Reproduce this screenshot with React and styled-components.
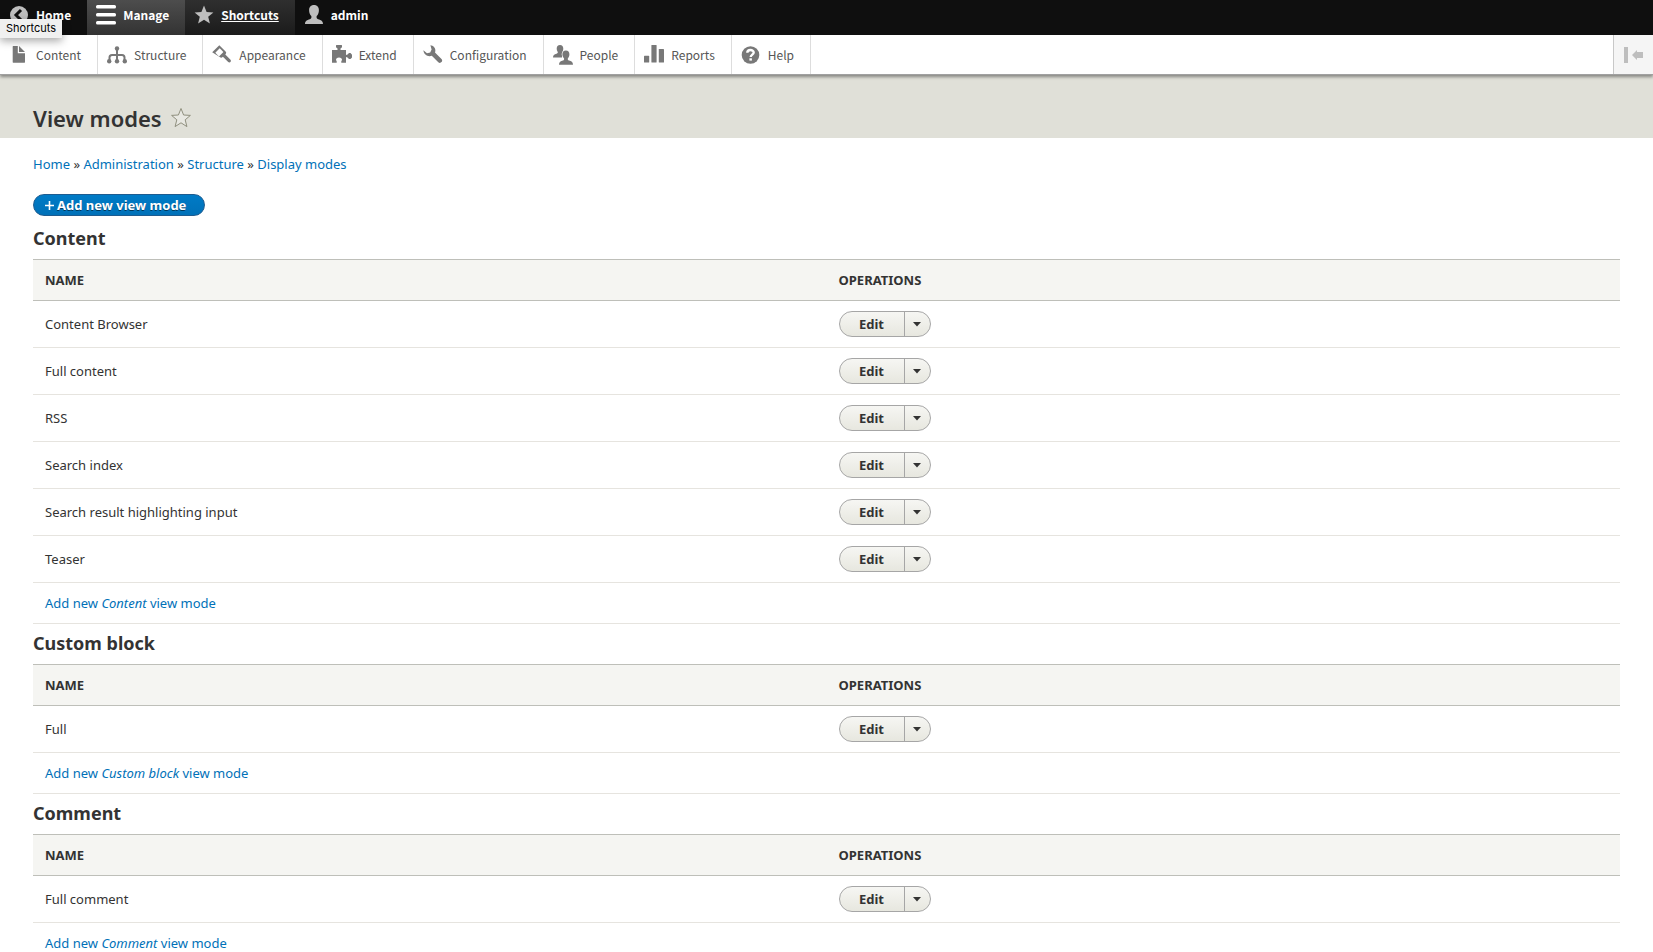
import React from 'react'
import styled, { createGlobalStyle, css } from 'styled-components'

const palette = {
  text: '#333333',
  link: '#0071b8',
  header: '#e0e0d8',
  tableHead: '#f5f5f2',
  line: '#bebfb9',
  rowLine: '#e6e4df',
  icon: '#787878',
}

const toolbarFont = "'Noto Sans CJK SC', 'Noto Sans', sans-serif"
const bodyFont = "'Noto Sans', 'Open Sans', sans-serif"

const tabs = [
  { name: 'Home', icon: 'back' },
  { name: 'Manage', icon: 'hamburger', state: 'active' },
  { name: 'Shortcuts', icon: 'star', state: 'hover' },
  { name: 'admin', icon: 'user' },
]

const menu = [
  { name: 'Content', icon: 'file' },
  { name: 'Structure', icon: 'orgchart' },
  { name: 'Appearance', icon: 'paintbrush' },
  { name: 'Extend', icon: 'puzzle' },
  { name: 'Configuration', icon: 'wrench' },
  { name: 'People', icon: 'people' },
  { name: 'Reports', icon: 'barchart' },
  { name: 'Help', icon: 'help' },
]

const breadcrumb = ['Home', 'Administration', 'Structure', 'Display modes']

const groups = [
  {
    title: 'Content',
    modes: [
      'Content Browser',
      'Full content',
      'RSS',
      'Search index',
      'Search result highlighting input',
      'Teaser',
    ],
  },
  { title: 'Custom block', modes: ['Full'] },
  { title: 'Comment', modes: ['Full comment'] },
]

const starPoints =
  '10,0.5 12.6,7 19.4,7.4 14.2,11.8 15.9,18.6 10,14.8 4.1,18.6 5.8,11.8 0.6,7.4 7.4,7'

const shapes = {
  back: (
    <>
      <circle cx="10" cy="10" r="9" />
      <path d="M12 5 7 10l5 5" fill="none" stroke="#0f0f0f" strokeWidth="3" />
    </>
  ),
  hamburger: (
    <g fill="#fff">
      <rect y="0" width="20" height="3.4" rx="1.5" />
      <rect y="8" width="20" height="3.4" rx="1.5" />
      <rect y="16" width="20" height="3.4" rx="1.5" />
    </g>
  ),
  star: <polygon points={starPoints} />,
  user: (
    <path d="M10 0c3.2 0 4.9 2.2 4.9 5.2 0 2.4-.8 4.6-2.2 5.9-.5 1.6.1 2.6 1.5 3.1 2.8.8 4.8 1.700 4.800 4.800H1c0-3.100 2-4 4.800-4.800 1.400-.5 2-1.500 1.500-3.100C5.900 9.800 5.100 7.600 5.100 5.200 5.100 2.200 6.800 0 10 0z" />
  ),
  file: (
    <path d="M4.200 2h4.600v7.300h7.200v9c0 .3-.2.500-.5.500H4.200c-.3 0-.5-.2-.5-.5V2.500c0-.3.2-.5.5-.5zM10 2l6 6h-6z" />
  ),
  orgchart: (
    <>
      <circle cx="10" cy="4.5" r="2.2" />
      <circle cx="2.2" cy="17.3" r="2.2" />
      <circle cx="10" cy="17.3" r="2.2" />
      <circle cx="17.8" cy="17.3" r="2.2" />
      <path
        d="M10 5v12M2.500 17v-3.500q0-2.500 2.500-2.500h10q2.500 0 2.500 2.500V17"
        fill="none"
        stroke={palette.icon}
        strokeWidth="2"
      />
    </>
  ),
  paintbrush: (
    <>
      <path d="M.2 8.300 7.300 1.200l6.500 6.500c.8.800.3 1.800-.5 2.700l5.200 5.300c1.400 1.500-.8 3.700-2.300 2.300l-5.300-5.200c-1 .9-1.900 1.400-2.800.5z" />
      <path d="M3.300 8.700 7.700 4.300l3.700 3.700L7 12.400z" fill="#fff" />
    </>
  ),
  puzzle: (
    <path d="M0 6h5.500V4.500L4 3.200V1.500c0-.3.200-.5.500-.5h5c.3 0 .5.200.5.500v1.700L8.500 4.500V6H14v5l1.500-.5L17 9h1.500L20 10.800v2.700L18.500 15H17l-1.500-1.500L14 13v5.700H9.300v-1.400l.7-1.300c0-1.400-1-2.500-3-2.500s-3 1.100-3 2.500l.7 1.300v1.400H0z" />
  ),
  wrench: (
    <path d="M7.400 1.200c3.600.2 5.900 3.800 4.600 7.400l6.500 6.400c2 2.200-.9 5.200-3.200 3.300l-6.500-6.500C5 13.300.7 10.700.4 6.300L4 9.200l3.200-.6 1.400-3.200z" />
  ),
  people: (
    <>
      <path d="M7 1c2.200 0 3.300 1.500 3.300 3.700 0 1.200-.4 2.400-1 3.300-1.300 2 .2 4-.3 5.500H0c0-2.200 1.300-3 3.500-3.700 1.300-.4 1.700-1.200 1-2.200-.5-.8-.8-1.800-.8-2.900C3.700 2.500 4.800 1 7 1z" />
      <path
        d="M12.900 6.500c2.300 0 3.500 1.600 3.500 3.800 0 1.700-.6 3-1.500 4-.3 1.300 0 1.900 1.100 2.300 2.300.7 4 1.500 4 4.200H6c0-2.700 1.700-3.500 4-4.200 1-.4 1.300-1 1-2.300-1-1-1.600-2.300-1.600-4 0-2.200 1.200-3.800 3.500-3.800z"
        stroke="#fff"
        strokeWidth="1"
        paintOrder="stroke"
      />
    </>
  ),
  barchart: (
    <>
      <rect y="11.8" width="5.2" height="6.7" rx=".6" />
      <rect x="7.4" y="1" width="5.2" height="17.5" rx=".6" />
      <rect x="14.8" y="5" width="5.2" height="13.5" rx=".6" />
    </>
  ),
  help: (
    <>
      <circle cx="9.5" cy="11" r="8.8" />
      <path
        d="M6.300 8.800c0-3.700 6.400-3.500 6.400-.3 0 2.100-3 2.200-3 4.600"
        fill="none"
        stroke="#fff"
        strokeWidth="2.4"
      />
      <rect x="8.4" y="14.3" width="2.5" height="2.3" fill="#fff" />
    </>
  ),
}

const Icon = ({ name, color, height }) => (
  <IconSvg
    viewBox={`0 0 20 ${height}`}
    width="20"
    height={height}
    fill={color}
    aria-hidden="true"
  >
    {shapes[name]}
  </IconSvg>
)

const ViewModeTable = ({ title, modes }) => (
  <section>
    <GroupTitle>{title}</GroupTitle>
    <Table>
      <thead>
        <tr>
          <HeadCell scope="col">Name</HeadCell>
          <HeadCell scope="col">Operations</HeadCell>
        </tr>
      </thead>
      <tbody>
        {modes.map(mode => (
          <tr key={mode}>
            <Cell>{mode}</Cell>
            <Cell>
              <DropButton>
                <EditButton type="button">Edit</EditButton>
                <ToggleButton type="button" aria-label="List additional actions">
                  <svg width="8" height="5" viewBox="0 0 8 5" aria-hidden="true">
                    <path d="M0 0h8L4 4.500z" fill={palette.text} />
                  </svg>
                </ToggleButton>
              </DropButton>
            </Cell>
          </tr>
        ))}
        <tr>
          <Cell colSpan={2}>
            <Link href="#add">
              Add new <em>{title}</em> view mode
            </Link>
          </Cell>
        </tr>
      </tbody>
    </Table>
  </section>
)

const App = () => {
  return (
    <>
      <GlobalStyle />
      <Toolbar>
        <TabBar>
          {tabs.map(tab => (
            <Tab key={tab.name} href="#tab" $state={tab.state}>
              <Icon name={tab.icon} color="#bebebe" height={20} />
              {tab.name}
            </Tab>
          ))}
        </TabBar>
        <Tooltip role="tooltip">Shortcuts</Tooltip>
        <Tray>
          {menu.map(item => (
            <MenuLink key={item.name} href="#menu">
              <Icon name={item.icon} color={palette.icon} height={21} />
              {item.name}
            </MenuLink>
          ))}
          <OrientationButton type="button" aria-label="Vertical orientation">
            <svg width="20" height="16" viewBox="0 0 20 16" aria-hidden="true">
              <path d="M0 0h4v16H0zM8 8l5-5v2h6v6h-6v2z" fill="#bebebe" />
            </svg>
          </OrientationButton>
        </Tray>
      </Toolbar>

      <PageHeader>
        <PageTitle>View modes</PageTitle>
        <StarButton type="button" aria-label="Add to shortcuts">
          <svg width="20" height="20" viewBox="0 0 20 20" aria-hidden="true">
            <polygon
              points={starPoints}
              fill="#e8e8e2"
              stroke="#8f8f7e"
              strokeLinejoin="round"
            />
          </svg>
        </StarButton>
      </PageHeader>

      <Main>
        <Breadcrumb aria-label="Breadcrumb">
          {breadcrumb.map((name, i) => (
            <React.Fragment key={name}>
              {i > 0 && ' » '}
              <Link href="#crumb">{name}</Link>
            </React.Fragment>
          ))}
        </Breadcrumb>
        <AddButton href="#add">
          <svg width="9" height="9" viewBox="0 0 9 9" aria-hidden="true">
            <path d="M4.500 0v9M0 4.500h9" stroke="#fff" strokeWidth="1.6" />
          </svg>
          Add new view mode
        </AddButton>
        {groups.map(group => (
          <ViewModeTable key={group.title} {...group} />
        ))}
      </Main>
    </>
  )
}

const GlobalStyle = createGlobalStyle`
  * {
    box-sizing: border-box;
  }
  html {
    scrollbar-width: none;
  }
  body {
    margin: 0;
    background: #fff;
    color: ${palette.text};
    font: 13px/20px ${bodyFont};
  }
  button {
    font: inherit;
    color: inherit;
    cursor: pointer;
  }
`

const IconSvg = styled.svg`
  flex: none;
`

const Toolbar = styled.header`
  position: relative;
  font-family: ${toolbarFont};
  font-size: 12px;
  box-shadow: 0 2px 3px rgba(0, 0, 0, 0.4);
`

const TabBar = styled.nav`
  display: flex;
  height: 35px;
  background: #0f0f0f;
`

const itemLayout = css`
  display: flex;
  align-items: center;
  gap: 7px;
  padding: 0 16px 0 9px;
  text-decoration: none;
`

const Tab = styled.a`
  ${itemLayout}
  padding-bottom: 5px;
  color: #fff;
  font-weight: 700;

  ${({ $state }) =>
    $state === 'active' &&
    css`
      background: linear-gradient(#4d4d4d, #333);
    `}
  ${({ $state }) =>
    $state === 'hover' &&
    css`
      background: linear-gradient(#2f2f2f, #1b1b1b);
      text-decoration: underline;
    `}
`

const Tooltip = styled.div`
  position: absolute;
  top: 19px;
  left: 0;
  padding: 0 6px;
  background: #f0f0f0;
  color: #000;
  font: 11px/19px Inter, sans-serif;
  box-shadow: 0 3px 8px rgba(0, 0, 0, 0.35);
`

const Tray = styled.nav`
  display: flex;
  height: 40px;
  background: #fff;
  border-bottom: 1px solid #a0a0a0;
`

const MenuLink = styled.a`
  ${itemLayout}
  border-right: 1px solid #dddddd;
  color: #565656;
`

const OrientationButton = styled.button`
  display: flex;
  align-items: center;
  justify-content: center;
  width: 40px;
  margin-left: auto;
  padding: 0;
  background: #f5f5f5;
  border: 0;
  border-left: 1px solid #c8c8c8;
`

const PageHeader = styled.div`
  display: flex;
  align-items: center;
  gap: 9px;
  padding: 28px 33px 5px;
  background: ${palette.header};
`

const PageTitle = styled.h1`
  margin: 0;
  font-size: 22px;
  line-height: 30px;
  font-weight: 600;
`

const StarButton = styled.button`
  display: flex;
  padding: 0;
  border: 0;
  background: none;
`

const Main = styled.main`
  padding: 16px 33px;
`

const Breadcrumb = styled.nav`
  margin-bottom: 20px;
`

const Link = styled.a`
  color: ${palette.link};
  text-decoration: none;
`

const AddButton = styled.a`
  display: flex;
  align-items: center;
  gap: 3px;
  width: fit-content;
  height: 22px;
  margin-bottom: 3px;
  padding: 0 18px 0 11px;
  border: 1px solid #1e5c90;
  border-radius: 20px;
  background: linear-gradient(#007bc6, #0071b8);
  color: #fff;
  font-weight: 700;
  text-decoration: none;
  text-shadow: 0 1px rgba(0, 0, 0, 0.5);
`

const GroupTitle = styled.h2`
  margin: 0;
  padding: 4px 0 6px;
  font-size: 18px;
  line-height: 30px;
  font-weight: 700;
`

const Table = styled.table`
  width: 100%;
  table-layout: fixed;
  border-spacing: 0;
`

const HeadCell = styled.th`
  padding: 10px 12px;
  background: ${palette.tableHead};
  border: solid ${palette.line};
  border-width: 1px 0;
  font-weight: 700;
  text-align: left;
  text-transform: uppercase;
`

const Cell = styled.td`
  padding: 10px 12px;
  border-bottom: 1px solid ${palette.rowLine};
`

const DropButton = styled.div`
  display: flex;
  width: 92px;
  height: 26px;
  border: 1px solid #a6a6a6;
  border-radius: 20px;
  overflow: hidden;
  background: linear-gradient(#f6f6f3, #e7e7df);
`

const EditButton = styled.button`
  flex: 1;
  padding: 0;
  border: 0;
  background: none;
  font-weight: 700;
`

const ToggleButton = styled.button`
  display: flex;
  align-items: center;
  justify-content: center;
  width: 26px;
  padding: 0;
  border: 0;
  border-left: 1px solid #a6a6a6;
  background: none;
`

export default App
